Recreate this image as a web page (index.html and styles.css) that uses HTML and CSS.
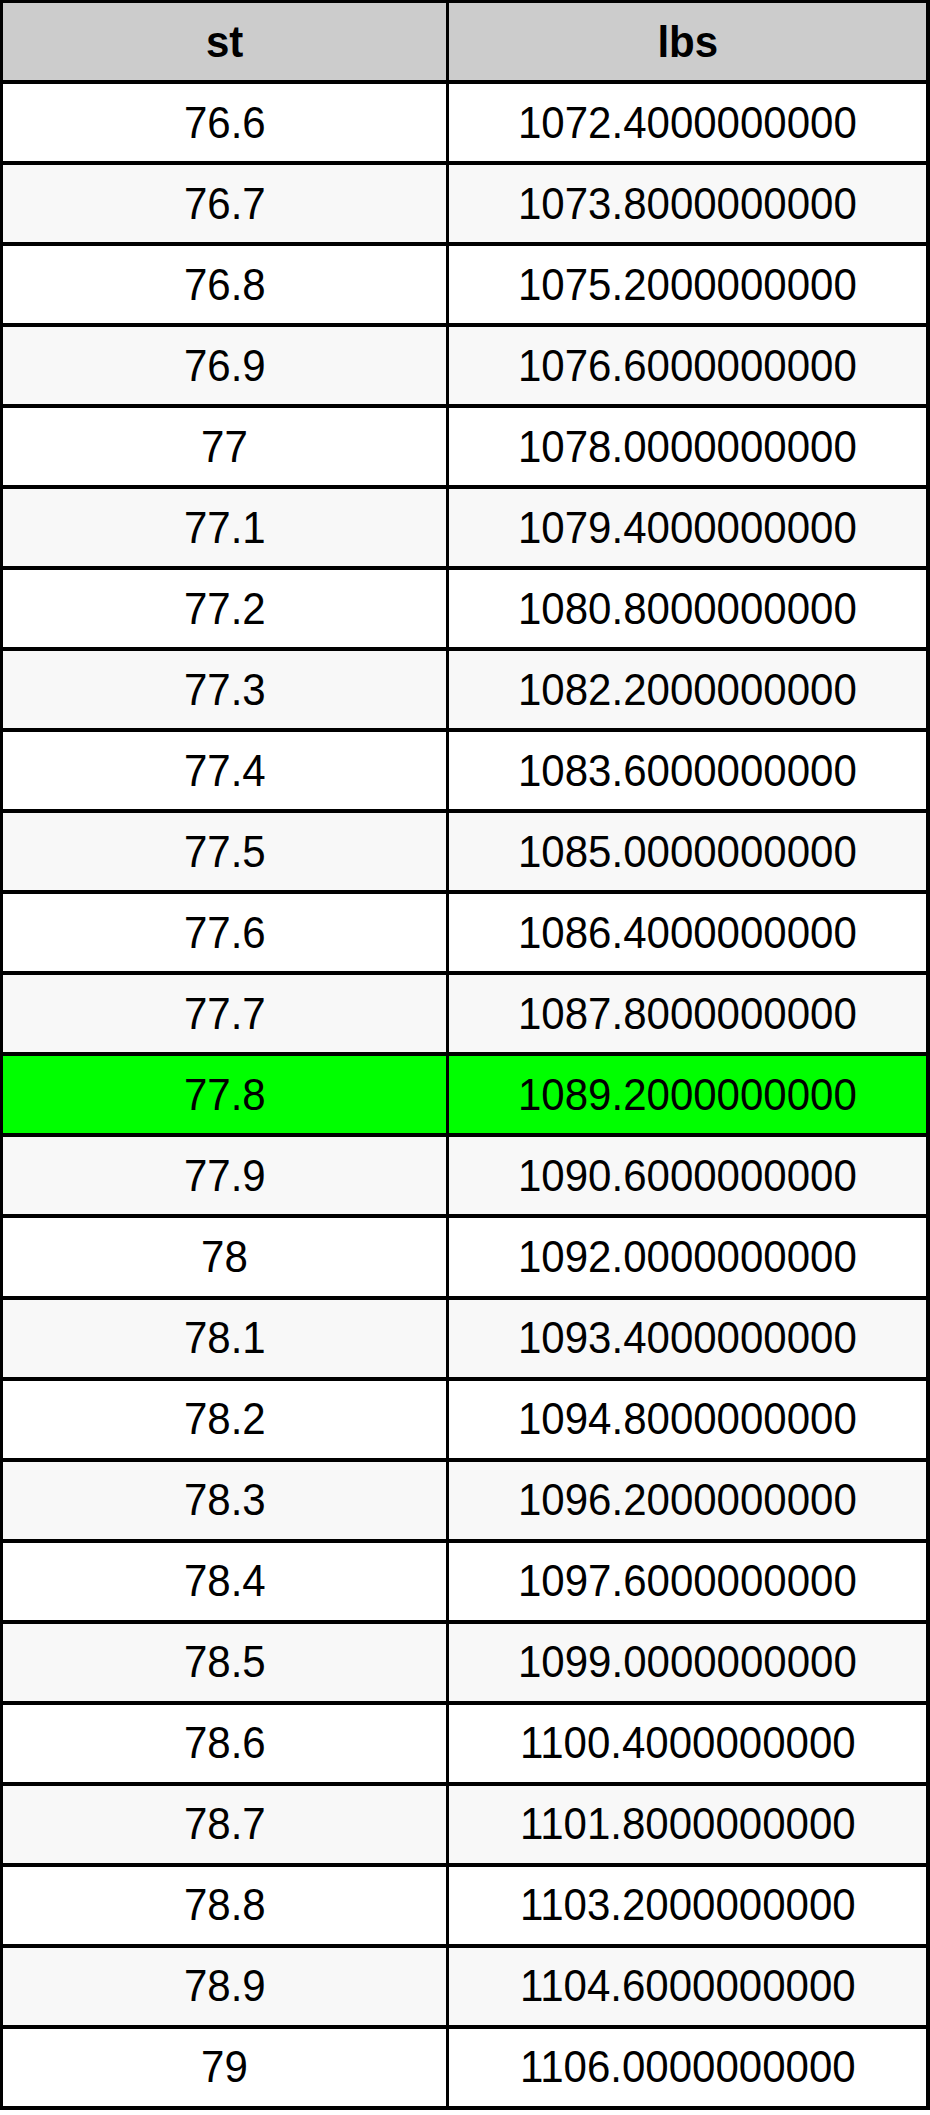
FILE: index.html
```html
<!DOCTYPE html>
<html>
<head>
<meta charset="utf-8">
<link rel="stylesheet" href="styles.css">
</head>
<body>
<div class="table">
  <div class="row head"><div class="cell"><span>st</span></div><div class="cell"><span>lbs</span></div></div>
  <div class="row"><div class="cell"><span>76.6</span></div><div class="cell"><span>1072.4000000000</span></div></div>
  <div class="row alt"><div class="cell"><span>76.7</span></div><div class="cell"><span>1073.8000000000</span></div></div>
  <div class="row"><div class="cell"><span>76.8</span></div><div class="cell"><span>1075.2000000000</span></div></div>
  <div class="row alt"><div class="cell"><span>76.9</span></div><div class="cell"><span>1076.6000000000</span></div></div>
  <div class="row"><div class="cell"><span>77</span></div><div class="cell"><span>1078.0000000000</span></div></div>
  <div class="row alt"><div class="cell"><span>77.1</span></div><div class="cell"><span>1079.4000000000</span></div></div>
  <div class="row"><div class="cell"><span>77.2</span></div><div class="cell"><span>1080.8000000000</span></div></div>
  <div class="row alt"><div class="cell"><span>77.3</span></div><div class="cell"><span>1082.2000000000</span></div></div>
  <div class="row"><div class="cell"><span>77.4</span></div><div class="cell"><span>1083.6000000000</span></div></div>
  <div class="row alt"><div class="cell"><span>77.5</span></div><div class="cell"><span>1085.0000000000</span></div></div>
  <div class="row"><div class="cell"><span>77.6</span></div><div class="cell"><span>1086.4000000000</span></div></div>
  <div class="row alt"><div class="cell"><span>77.7</span></div><div class="cell"><span>1087.8000000000</span></div></div>
  <div class="row hl"><div class="cell"><span>77.8</span></div><div class="cell"><span>1089.2000000000</span></div></div>
  <div class="row alt"><div class="cell"><span>77.9</span></div><div class="cell"><span>1090.6000000000</span></div></div>
  <div class="row"><div class="cell"><span>78</span></div><div class="cell"><span>1092.0000000000</span></div></div>
  <div class="row alt"><div class="cell"><span>78.1</span></div><div class="cell"><span>1093.4000000000</span></div></div>
  <div class="row"><div class="cell"><span>78.2</span></div><div class="cell"><span>1094.8000000000</span></div></div>
  <div class="row alt"><div class="cell"><span>78.3</span></div><div class="cell"><span>1096.2000000000</span></div></div>
  <div class="row"><div class="cell"><span>78.4</span></div><div class="cell"><span>1097.6000000000</span></div></div>
  <div class="row alt"><div class="cell"><span>78.5</span></div><div class="cell"><span>1099.0000000000</span></div></div>
  <div class="row"><div class="cell"><span>78.6</span></div><div class="cell"><span>1100.4000000000</span></div></div>
  <div class="row alt"><div class="cell"><span>78.7</span></div><div class="cell"><span>1101.8000000000</span></div></div>
  <div class="row"><div class="cell"><span>78.8</span></div><div class="cell"><span>1103.2000000000</span></div></div>
  <div class="row alt"><div class="cell"><span>78.9</span></div><div class="cell"><span>1104.6000000000</span></div></div>
  <div class="row"><div class="cell"><span>79</span></div><div class="cell"><span>1106.0000000000</span></div></div>
</div>
</body>
</html>
```
FILE: styles.css
```css
html, body {
  margin: 0;
  padding: 0;
  background: #ffffff;
}
.table {
  width: 930px;
  box-sizing: border-box;
  background: #000000;
  padding: 3px 4px 4px 3px;
  display: flex;
  flex-direction: column;
  gap: 4px;
  font-family: "Liberation Sans", Arial, sans-serif;
  font-size: 44px;
  color: #000000;
}
.row {
  display: grid;
  grid-template-columns: 443px 477px;
  column-gap: 3px;
  height: 77.04px;
}
.cell {
  display: flex;
  align-items: center;
  justify-content: center;
  background: #ffffff;
}
.cell span {
  display: inline-block;
  transform: scaleX(0.955);
}
.row.alt .cell {
  background: #f8f8f8;
}
.row.head .cell {
  background: #cccccc;
  font-weight: bold;
}
.row.hl .cell {
  background: #00ff00;
}
```
